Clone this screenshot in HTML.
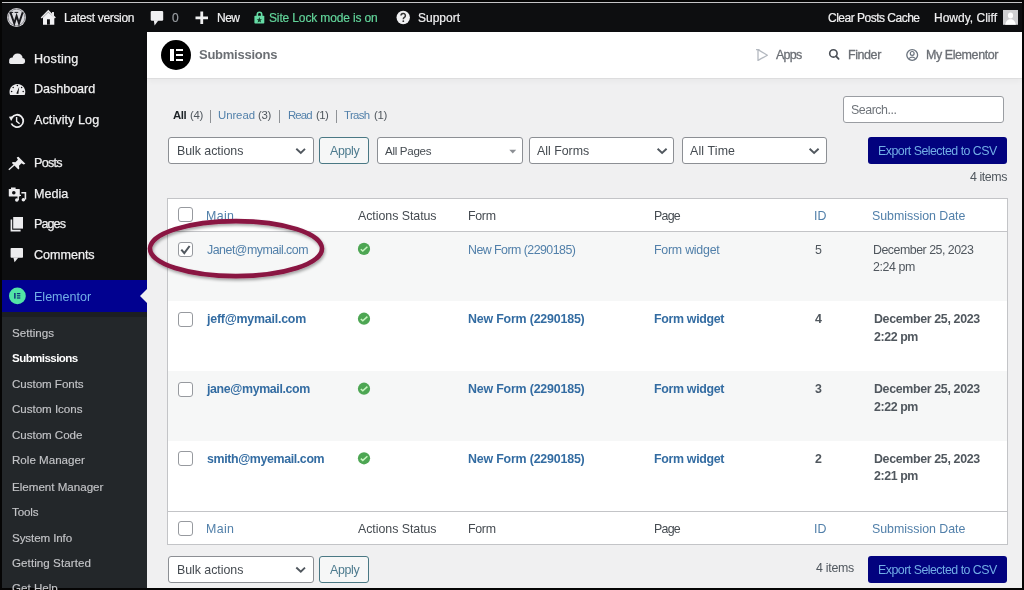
<!DOCTYPE html>
<html><head><meta charset="utf-8">
<style>
*{box-sizing:border-box;margin:0;padding:0}
html,body{width:1024px;height:590px;overflow:hidden;background:#050505;font-family:"Liberation Sans",sans-serif}
.a{position:absolute}
.t{position:absolute;white-space:nowrap;line-height:1;will-change:transform}
svg{position:absolute;overflow:visible}
#bar{position:absolute;left:2px;top:3px;width:1020px;height:29px;background:#0d0e10}
#topline{position:absolute;left:2px;top:2px;width:1020px;height:1px;background:#c4c4c6}
#side{position:absolute;left:2px;top:32px;width:145px;height:556px;background:#0d0e10}
#band{position:absolute;left:2px;top:280px;width:145px;height:32px;background:#010190}
#sub{position:absolute;left:2px;top:312px;width:145px;height:276px;background:#23272a;border-top:5px solid #1c1f22}
#content{position:absolute;left:147px;top:32px;width:875px;height:556px;background:#f0f0f1}
#hdr{position:absolute;left:147px;top:32px;width:875px;height:46px;background:#fff;box-shadow:0 1px 0 rgba(0,0,0,.05),0 3px 6px rgba(0,0,0,.04)}
.sel{position:absolute;background:#fff;border:1px solid #8c8f94;border-radius:3px;height:27px;top:137px}
.btn{position:absolute;background:#f6f7f7;border:1px solid #4a7884;border-radius:3px;height:27px;top:137px}
.exp{position:absolute;background:#02027e;border-radius:3px;height:27px;top:137px}
.cb{position:absolute;left:178px;width:15px;height:15px;border:1px solid #979a9f;border-radius:3px;background:#fff}
.ok{position:absolute;left:358px;width:13px;height:13px;border-radius:50%;background:#4fb05a}
#tbl{position:absolute;left:167px;top:198px;width:841px;height:347px;border:1px solid #c3c4c7;background:#fff}
.rw{position:absolute;left:168px;width:839px}
</style></head><body>
<div id="topline"></div>
<div id="bar"></div>
<div id="side"></div>
<div id="band"></div>
<div id="sub"></div>
<div id="content"></div>
<div id="hdr"></div>
<!-- pointer -->
<div class="a" style="left:140px;top:289px;width:0;height:0;border-top:7.5px solid transparent;border-bottom:7.5px solid transparent;border-right:7px solid #f0f0f1"></div>

<!-- elementor logo -->
<div class="a" style="left:161px;top:40px;width:30px;height:30px;border-radius:50%;background:#000"></div>
<div class="a" style="left:170px;top:49px;width:3.5px;height:12px;background:#fff"></div>
<div class="a" style="left:175.5px;top:49px;width:7px;height:2.4px;background:#fff"></div>
<div class="a" style="left:175.5px;top:53.8px;width:7px;height:2.4px;background:#fff"></div>
<div class="a" style="left:175.5px;top:58.6px;width:7px;height:2.4px;background:#fff"></div>

<!-- controls -->
<div class="sel" style="left:168px;width:146px"></div>
<div class="btn" style="left:319px;width:50px"></div>
<div class="sel" style="left:377px;width:146px"></div>
<div class="sel" style="left:529px;width:145px"></div>
<div class="sel" style="left:682px;width:145px"></div>
<div class="sel" style="left:843px;top:96px;width:161px;height:27px;border-color:#9a9da2"></div>
<div class="exp" style="left:868px;width:139px"></div>

<!-- table -->
<div id="tbl"></div>
<div class="a" style="left:168px;top:231px;width:839px;height:1px;background:#c3c4c7"></div>
<div class="rw" style="top:232px;height:69px;background:#f6f7f7"></div>
<div class="rw" style="top:371px;height:70px;background:#f6f7f7"></div>
<div class="a" style="left:168px;top:511px;width:839px;height:1px;background:#c3c4c7"></div>
<div class="cb" style="top:207px"></div>
<div class="cb" style="top:242px"></div>
<div class="cb" style="top:312px"></div>
<div class="cb" style="top:382px"></div>
<div class="cb" style="top:451px"></div>
<div class="cb" style="top:521px"></div>

<!-- bottom controls -->
<div class="sel" style="left:168px;top:556px;width:146px"></div>
<div class="btn" style="left:319px;top:556px;width:50px"></div>
<div class="exp" style="left:868px;top:556px;width:139px"></div>

<svg style="left:0;top:0" width="1024" height="590" viewBox="0 0 1024 590">
<!-- WP logo -->
<circle cx="16.5" cy="17.5" r="9.4" fill="#dcdce0"/>
<circle cx="16.5" cy="17.5" r="8.3" fill="none" stroke="#3a3a40" stroke-width="0.5"/>
<path d="M10.4 12.4 L14.3 23.4 L16.6 16 L19 23.4 L22.7 12.2" fill="none" stroke="#18181c" stroke-width="1.9" stroke-linejoin="miter"/>
<path d="M9.6 12.4 h3.6 M14.6 12.4 h3.6" stroke="#18181c" stroke-width="1"/>
<!-- home -->
<path d="M41.5 17.8 L48.3 10.9 L55.2 17.8 L53.9 17.8 L53.9 12.2 L52 12.2 L52 14.6 L48.3 10.9" fill="#eeeef0"/>
<path d="M41.3 18 L48.3 11 L55.3 18" fill="none" stroke="#e8e8ea" stroke-width="1.6"/>
<rect x="52" y="12.2" width="1.9" height="4" fill="#e8e8ea"/>
<path d="M43 17.4 L48.3 12.3 L54.3 17.4 L54.3 24.7 L43 24.7 Z" fill="#f2f2f4"/>
<rect x="47" y="19.3" width="2.9" height="5.4" fill="#0e0e10"/>
<!-- comment -->
<rect x="150.7" y="10.9" width="12.5" height="9.8" rx="1.2" fill="#f0f0f2"/>
<path d="M153.8 20.3 L154.6 25.4 L158.5 20.3 Z" fill="#f0f0f2"/>
<!-- plus -->
<path d="M195.5 17.8 H208 M201.75 11.6 V24" stroke="#f0f0f1" stroke-width="2.8"/>
<!-- lock -->
<path d="M257.3 16 V14.4 A2.2 2.2 0 0 1 261.7 14.4 V16" fill="none" stroke="#66dca6" stroke-width="1.6"/>
<rect x="254.4" y="15.8" width="9.9" height="7.8" rx="0.8" fill="#66dca6"/>
<path d="M259.35 17 L260.1 19.2 L262 19.3 L260.5 20.5 L261.1 22.6 L259.35 21.4 L257.6 22.6 L258.2 20.5 L256.7 19.3 L258.6 19.2 Z" fill="#123a26"/>
<!-- help -->
<circle cx="403.2" cy="17.5" r="6.7" fill="#f0f0f2"/>
<path d="M401 15.6 A2.2 2.1 0 1 1 404.4 17.3 Q403.3 18 403.3 19.3" fill="none" stroke="#333" stroke-width="1.5"/>
<circle cx="403.3" cy="21.2" r="0.9" fill="#333"/>
<!-- avatar -->
<rect x="1003" y="10" width="15" height="14.8" fill="#cfcfd1"/>
<ellipse cx="1010.5" cy="15.4" rx="2.6" ry="3" fill="#fff"/>
<path d="M1005.2 24.8 Q1005.8 20.4 1009.2 19.2 L1011.8 19.2 Q1015.2 20.4 1015.8 24.8 Z" fill="#fff"/>
<!-- sidebar icons -->
<g fill="#ececee"><circle cx="12.4" cy="60.6" r="3.2"/><circle cx="17.6" cy="58.4" r="5"/><circle cx="22.2" cy="61" r="2.9"/><rect x="11" y="60" width="11.5" height="3.9" rx="0.5"/><rect x="9.2" y="61" width="3" height="2.9" rx="1.4"/></g>
<path d="M10.1 94.9 A7.9 7.9 0 1 1 24.7 94.9 Z" fill="#ececee"/>
<g fill="#0e0e10"><circle cx="17.4" cy="85.6" r="0.75"/><circle cx="13.2" cy="87.6" r="0.75"/><circle cx="21.6" cy="87.6" r="0.75"/><circle cx="11.6" cy="91.4" r="0.75"/><circle cx="23.2" cy="91.4" r="0.75"/><path d="M19.2 86.8 L16.3 93.6 L18.3 94 Z"/></g>
<path d="M11.9 117.5 A6.2 6.2 0 1 1 11.4 123.5" fill="none" stroke="#ececee" stroke-width="1.8"/>
<path d="M8.9 116.8 L13.8 116.2 L11.2 121 Z" fill="#ececee"/>
<path d="M16.6 116.9 V121.3 L19.6 123.8" fill="none" stroke="#ececee" stroke-width="1.4"/>
<!-- posts pin -->
<path d="M18.4 156.8 L25.4 163.8 L23.6 164.6 L21.5 163.3 L19 165.8 L19.3 168.6 L18.4 169.4 L11.9 162.9 L12.7 162 L15.4 162.3 L17.9 159.8 L16.7 157.6 Z" fill="#ececee"/>
<path d="M14.7 164.4 L8.8 169.8" stroke="#ececee" stroke-width="1.3"/>
<!-- media -->
<rect x="8.8" y="189" width="11" height="7.6" rx="0.6" fill="#ececee"/>
<rect x="11" y="187.5" width="4.6" height="2.2" fill="#ececee"/>
<circle cx="13.8" cy="192.7" r="1.8" fill="#0e0e10"/>
<path d="M21.4 192.7 H25.4 V199.4" fill="none" stroke="#ececee" stroke-width="1.6"/>
<circle cx="23.4" cy="199.8" r="1.8" fill="#ececee"/>
<circle cx="16.8" cy="200" r="1.8" fill="#ececee"/>
<path d="M18.2 200 V195.4 H21" fill="none" stroke="#ececee" stroke-width="1.4"/>
<!-- pages -->
<rect x="13.2" y="217" width="9.8" height="11.6" fill="#ececee"/>
<path d="M11.4 219.6 V230.6 H20.6" fill="none" stroke="#ececee" stroke-width="1.6"/>
<!-- comments -->
<rect x="10.6" y="248" width="12.4" height="9.8" rx="0.8" fill="#ececee"/>
<path d="M13.4 257.4 L14.6 262.2 L18.4 257.4 Z" fill="#ececee"/>
<!-- elementor sidebar -->
<circle cx="17.4" cy="295.9" r="8.4" fill="#52e3a6"/>
<rect x="14.1" y="293" width="1.5" height="5.6" fill="#10307a"/>
<rect x="16.9" y="293" width="3.4" height="1.2" fill="#10307a"/>
<rect x="16.9" y="295.2" width="3.4" height="1.2" fill="#10307a"/>
<rect x="16.9" y="297.4" width="3.4" height="1.2" fill="#10307a"/>
<!-- header icons -->
<path d="M758 49.6 V60.4 L767.4 55.2 Z M756 49.6 H759.6" fill="none" stroke="#b4b9c0" stroke-width="1.3" stroke-linejoin="round"/>
<circle cx="833.4" cy="53.4" r="3.7" fill="none" stroke="#4a4f56" stroke-width="1.6"/>
<path d="M836 56.2 L838.6 58.9" stroke="#4a4f56" stroke-width="1.8" stroke-linecap="round"/>
<circle cx="912.2" cy="55" r="5.4" fill="none" stroke="#69727d" stroke-width="1.3"/>
<circle cx="912.2" cy="53.4" r="1.9" fill="none" stroke="#69727d" stroke-width="1.2"/>
<path d="M908.8 58.6 Q912.2 55.6 915.6 58.6" fill="none" stroke="#69727d" stroke-width="1.2"/>
<!-- chevrons -->
<g fill="none" stroke="#50575e" stroke-width="1.9">
<path d="M296.3 148.8 L300.8 153 L305 148.9"/>
<path d="M657.6 148.8 L662.1 153 L666.6 148.8"/>
<path d="M809.6 148.8 L814.1 153 L818.6 148.8"/>
<path d="M296.3 567.5 L300.8 571.7 L305 567.6"/>
</g>
<path d="M509.3 149.8 H516.2 L512.75 153.6 Z" fill="#8c8f94"/>
<!-- check in checkbox -->
<path d="M181.3 249.6 L184.3 253.2 L189.6 246" fill="none" stroke="#50575e" stroke-width="2"/>
<!-- green checks -->
<g>
<circle cx="364" cy="248.9" r="6.1" fill="#4da653"/>
<circle cx="364" cy="318.7" r="6.1" fill="#4da653"/>
<circle cx="364" cy="388.7" r="6.1" fill="#4da653"/>
<circle cx="364" cy="458.3" r="6.1" fill="#4da653"/>
</g>
<g fill="none" stroke="#c8f5c0" stroke-width="1.5">
<path d="M360.8 249.2 L362.8 251 L367.4 246.8"/>
<path d="M360.8 319 L362.8 320.8 L367.4 316.6"/>
<path d="M360.8 389 L362.8 390.8 L367.4 386.6"/>
<path d="M360.8 458.6 L362.8 460.4 L367.4 456.2"/>
</g>
</svg>

<div class="t" style="left:63.60px;top:11.84px;font-size:12px;color:#f0f0f1;letter-spacing:-0.331px;-webkit-text-stroke:0.2px currentColor;">Latest version</div>
<div class="t" style="left:171.70px;top:11.84px;font-size:12px;color:#9a9ea3;-webkit-text-stroke:0.2px currentColor;">0</div>
<div class="t" style="left:216.60px;top:11.84px;font-size:12px;color:#f0f0f1;letter-spacing:-0.530px;-webkit-text-stroke:0.2px currentColor;">New</div>
<div class="t" style="left:269.20px;top:11.84px;font-size:12px;color:#62d49a;letter-spacing:-0.138px;-webkit-text-stroke:0.2px currentColor;">Site Lock mode is on</div>
<div class="t" style="left:418.00px;top:11.84px;font-size:12px;color:#f0f0f1;letter-spacing:-0.010px;-webkit-text-stroke:0.2px currentColor;">Support</div>
<div class="t" style="left:828.00px;top:11.84px;font-size:12px;color:#f0f0f1;letter-spacing:-0.501px;-webkit-text-stroke:0.2px currentColor;">Clear Posts Cache</div>
<div class="t" style="left:934.00px;top:11.84px;font-size:12px;color:#f0f0f1;letter-spacing:0.005px;-webkit-text-stroke:0.2px currentColor;">Howdy, Cliff</div>
<div class="t" style="left:33.80px;top:52.73px;font-size:12.6px;color:#f0f0f1;letter-spacing:0.248px;-webkit-text-stroke:0.25px #f0f0f1;">Hosting</div>
<div class="t" style="left:33.80px;top:83.33px;font-size:12.6px;color:#f0f0f1;letter-spacing:-0.052px;-webkit-text-stroke:0.25px #f0f0f1;">Dashboard</div>
<div class="t" style="left:33.80px;top:114.33px;font-size:12.6px;color:#f0f0f1;letter-spacing:0.068px;-webkit-text-stroke:0.25px #f0f0f1;">Activity Log</div>
<div class="t" style="left:33.80px;top:157.03px;font-size:12.6px;color:#f0f0f1;letter-spacing:-0.725px;-webkit-text-stroke:0.25px #f0f0f1;">Posts</div>
<div class="t" style="left:33.80px;top:187.53px;font-size:12.6px;color:#f0f0f1;letter-spacing:-0.024px;-webkit-text-stroke:0.25px #f0f0f1;">Media</div>
<div class="t" style="left:33.80px;top:217.93px;font-size:12.6px;color:#f0f0f1;letter-spacing:-0.930px;-webkit-text-stroke:0.25px #f0f0f1;">Pages</div>
<div class="t" style="left:33.80px;top:248.73px;font-size:12.6px;color:#f0f0f1;letter-spacing:-0.032px;-webkit-text-stroke:0.25px #f0f0f1;">Comments</div>
<div class="t" style="left:33.60px;top:290.93px;font-size:12.6px;color:#72aee6;letter-spacing:-0.032px;">Elementor</div>
<div class="t" style="left:12.00px;top:326.98px;font-size:11.6px;color:#c3c4c7;letter-spacing:0.009px;-webkit-text-stroke:0.15px currentColor;">Settings</div>
<div class="t" style="left:12.00px;top:377.88px;font-size:11.6px;color:#c3c4c7;letter-spacing:-0.046px;-webkit-text-stroke:0.15px currentColor;">Custom Fonts</div>
<div class="t" style="left:12.00px;top:403.08px;font-size:11.6px;color:#c3c4c7;letter-spacing:-0.039px;-webkit-text-stroke:0.15px currentColor;">Custom Icons</div>
<div class="t" style="left:12.00px;top:428.78px;font-size:11.6px;color:#c3c4c7;letter-spacing:-0.043px;-webkit-text-stroke:0.15px currentColor;">Custom Code</div>
<div class="t" style="left:12.00px;top:453.88px;font-size:11.6px;color:#c3c4c7;-webkit-text-stroke:0.15px currentColor;">Role Manager</div>
<div class="t" style="left:12.00px;top:480.58px;font-size:11.6px;color:#c3c4c7;letter-spacing:-0.006px;-webkit-text-stroke:0.15px currentColor;">Element Manager</div>
<div class="t" style="left:12.00px;top:506.08px;font-size:11.6px;color:#c3c4c7;letter-spacing:-0.121px;-webkit-text-stroke:0.15px currentColor;">Tools</div>
<div class="t" style="left:12.00px;top:531.78px;font-size:11.6px;color:#c3c4c7;letter-spacing:-0.105px;-webkit-text-stroke:0.15px currentColor;">System Info</div>
<div class="t" style="left:12.00px;top:556.88px;font-size:11.6px;color:#c3c4c7;letter-spacing:0.064px;-webkit-text-stroke:0.15px currentColor;">Getting Started</div>
<div class="t" style="left:12.00px;top:582.18px;font-size:11.6px;color:#c3c4c7;-webkit-text-stroke:0.15px currentColor;">Get Help</div>
<div class="t" style="left:12.00px;top:351.78px;font-size:11.6px;color:#ffffff;font-weight:bold;letter-spacing:-0.591px;">Submissions</div>
<div class="t" style="left:198.60px;top:47.69px;font-size:13px;color:#6b6f74;font-weight:bold;letter-spacing:-0.252px;">Submissions</div>
<div class="t" style="left:776.00px;top:49.32px;font-size:12.5px;color:#6b6f75;letter-spacing:-0.733px;-webkit-text-stroke:0.3px currentColor;">Apps</div>
<div class="t" style="left:847.50px;top:49.32px;font-size:12.5px;color:#6b6f75;letter-spacing:-0.428px;-webkit-text-stroke:0.3px currentColor;">Finder</div>
<div class="t" style="left:926.00px;top:49.32px;font-size:12.5px;color:#6b6f75;letter-spacing:-0.430px;-webkit-text-stroke:0.3px currentColor;">My Elementor</div>
<div class="t" style="left:172.90px;top:110.15px;font-size:11.4px;color:#1d2327;font-weight:bold;letter-spacing:-0.496px;">All</div>
<div class="t" style="left:190.00px;top:110.15px;font-size:11.4px;color:#50575e;letter-spacing:-0.254px;">(4)</div>
<div class="t" style="left:217.90px;top:110.15px;font-size:11.4px;color:#5280aa;letter-spacing:-0.078px;">Unread</div>
<div class="t" style="left:258.40px;top:110.15px;font-size:11.4px;color:#50575e;letter-spacing:-0.254px;">(3)</div>
<div class="t" style="left:287.50px;top:110.15px;font-size:11.4px;color:#5280aa;letter-spacing:-0.915px;">Read</div>
<div class="t" style="left:316.00px;top:110.15px;font-size:11.4px;color:#50575e;letter-spacing:-0.554px;">(1)</div>
<div class="t" style="left:344.00px;top:110.15px;font-size:11.4px;color:#5280aa;letter-spacing:-0.632px;">Trash</div>
<div class="t" style="left:373.70px;top:110.15px;font-size:11.4px;color:#50575e;letter-spacing:-0.354px;">(1)</div>
<div class="a" style="left:209.7px;top:110.3px;width:1.1px;height:12.4px;background:#8f9296"></div>
<div class="a" style="left:279.1px;top:110.3px;width:1.1px;height:12.4px;background:#8f9296"></div>
<div class="a" style="left:335.7px;top:110.3px;width:1.1px;height:12.4px;background:#8f9296"></div>
<div class="t" style="left:176.80px;top:144.60px;font-size:12.4px;color:#454b51;letter-spacing:-0.040px;">Bulk actions</div>
<div class="t" style="left:329.70px;top:144.60px;font-size:12.4px;color:#4d7b8e;letter-spacing:-0.325px;">Apply</div>
<div class="t" style="left:385.30px;top:144.98px;font-size:11.6px;color:#454b51;letter-spacing:-0.314px;">All Pages</div>
<div class="t" style="left:537.30px;top:144.60px;font-size:12.4px;color:#454b51;letter-spacing:-0.016px;">All Forms</div>
<div class="t" style="left:689.70px;top:144.60px;font-size:12.4px;color:#454b51;letter-spacing:0.131px;">All Time</div>
<div class="t" style="left:850.80px;top:103.50px;font-size:12.4px;color:#6f747a;letter-spacing:-0.463px;">Search...</div>
<div class="t" style="left:878.30px;top:144.90px;font-size:12.4px;color:#72aee6;letter-spacing:-0.517px;">Export Selected to CSV</div>
<div class="t" style="left:969.80px;top:170.80px;font-size:12.4px;color:#50575e;letter-spacing:-0.432px;">4 items</div>
<div class="t" style="left:206.40px;top:209.80px;font-size:12.4px;color:#5280aa;letter-spacing:0.364px;">Main</div>
<div class="t" style="left:357.90px;top:209.80px;font-size:12.4px;color:#454b51;letter-spacing:-0.049px;">Actions Status</div>
<div class="t" style="left:468.20px;top:209.80px;font-size:12.4px;color:#454b51;letter-spacing:-0.318px;">Form</div>
<div class="t" style="left:654.10px;top:209.80px;font-size:12.4px;color:#454b51;letter-spacing:-0.751px;">Page</div>
<div class="t" style="left:813.70px;top:209.80px;font-size:12.4px;color:#5280aa;">ID</div>
<div class="t" style="left:871.90px;top:209.80px;font-size:12.4px;color:#5280aa;letter-spacing:-0.017px;">Submission Date</div>
<div class="t" style="left:206.40px;top:523.00px;font-size:12.4px;color:#5280aa;letter-spacing:0.364px;">Main</div>
<div class="t" style="left:357.90px;top:523.00px;font-size:12.4px;color:#454b51;letter-spacing:-0.049px;">Actions Status</div>
<div class="t" style="left:468.20px;top:523.00px;font-size:12.4px;color:#454b51;letter-spacing:-0.318px;">Form</div>
<div class="t" style="left:654.10px;top:523.00px;font-size:12.4px;color:#454b51;letter-spacing:-0.751px;">Page</div>
<div class="t" style="left:813.70px;top:523.00px;font-size:12.4px;color:#5280aa;">ID</div>
<div class="t" style="left:871.90px;top:523.00px;font-size:12.4px;color:#5280aa;letter-spacing:-0.017px;">Submission Date</div>
<div class="t" style="left:207.40px;top:243.90px;font-size:12.4px;color:#5280aa;letter-spacing:-0.497px;">Janet@mymail.com</div>
<div class="t" style="left:468.20px;top:243.70px;font-size:12.4px;color:#5280aa;letter-spacing:-0.540px;">New Form (2290185)</div>
<div class="t" style="left:654.00px;top:243.70px;font-size:12.4px;color:#5280aa;letter-spacing:-0.240px;">Form widget</div>
<div class="t" style="left:815.00px;top:243.70px;font-size:12.4px;color:#50575e;">5</div>
<div class="t" style="left:873.00px;top:243.80px;font-size:12.4px;color:#50575e;letter-spacing:-0.496px;">December 25, 2023</div>
<div class="t" style="left:873.00px;top:260.70px;font-size:12.4px;color:#50575e;letter-spacing:-0.421px;">2:24 pm</div>
<div class="t" style="left:207.25px;top:313.10px;font-size:12.4px;color:#336ca2;font-weight:bold;letter-spacing:-0.222px;">jeff@mymail.com</div>
<div class="t" style="left:468.20px;top:313.10px;font-size:12.4px;color:#336ca2;font-weight:bold;letter-spacing:-0.183px;">New Form (2290185)</div>
<div class="t" style="left:654.20px;top:313.10px;font-size:12.4px;color:#336ca2;font-weight:bold;letter-spacing:-0.322px;">Form widget</div>
<div class="t" style="left:814.70px;top:313.10px;font-size:12.4px;color:#50575e;font-weight:bold;">4</div>
<div class="t" style="left:873.60px;top:313.10px;font-size:12.4px;color:#50575e;font-weight:bold;letter-spacing:-0.341px;">December 25, 2023</div>
<div class="t" style="left:873.60px;top:330.60px;font-size:12.4px;color:#50575e;font-weight:bold;letter-spacing:-0.412px;">2:22 pm</div>
<div class="t" style="left:207.25px;top:383.10px;font-size:12.4px;color:#336ca2;font-weight:bold;letter-spacing:-0.372px;">jane@mymail.com</div>
<div class="t" style="left:468.20px;top:383.10px;font-size:12.4px;color:#336ca2;font-weight:bold;letter-spacing:-0.183px;">New Form (2290185)</div>
<div class="t" style="left:654.20px;top:383.10px;font-size:12.4px;color:#336ca2;font-weight:bold;letter-spacing:-0.322px;">Form widget</div>
<div class="t" style="left:814.70px;top:383.10px;font-size:12.4px;color:#50575e;font-weight:bold;">3</div>
<div class="t" style="left:873.60px;top:383.10px;font-size:12.4px;color:#50575e;font-weight:bold;letter-spacing:-0.341px;">December 25, 2023</div>
<div class="t" style="left:873.60px;top:400.60px;font-size:12.4px;color:#50575e;font-weight:bold;letter-spacing:-0.412px;">2:22 pm</div>
<div class="t" style="left:207.00px;top:452.70px;font-size:12.4px;color:#336ca2;font-weight:bold;letter-spacing:-0.378px;">smith@myemail.com</div>
<div class="t" style="left:468.20px;top:452.70px;font-size:12.4px;color:#336ca2;font-weight:bold;letter-spacing:-0.183px;">New Form (2290185)</div>
<div class="t" style="left:654.20px;top:452.70px;font-size:12.4px;color:#336ca2;font-weight:bold;letter-spacing:-0.322px;">Form widget</div>
<div class="t" style="left:814.70px;top:452.70px;font-size:12.4px;color:#50575e;font-weight:bold;">2</div>
<div class="t" style="left:873.60px;top:452.70px;font-size:12.4px;color:#50575e;font-weight:bold;letter-spacing:-0.341px;">December 25, 2023</div>
<div class="t" style="left:873.60px;top:470.20px;font-size:12.4px;color:#50575e;font-weight:bold;letter-spacing:-0.412px;">2:21 pm</div>
<div class="t" style="left:176.80px;top:563.50px;font-size:12.4px;color:#454b51;letter-spacing:-0.040px;">Bulk actions</div>
<div class="t" style="left:329.70px;top:563.50px;font-size:12.4px;color:#4d7b8e;letter-spacing:-0.325px;">Apply</div>
<div class="t" style="left:816.20px;top:562.00px;font-size:12.4px;color:#50575e;letter-spacing:-0.282px;">4 items</div>
<div class="t" style="left:878.30px;top:563.50px;font-size:12.4px;color:#72aee6;letter-spacing:-0.517px;">Export Selected to CSV</div>

<!-- ellipse -->
<svg style="left:0;top:0" width="1024" height="590" viewBox="0 0 1024 590">
<defs><filter id="sh" x="-20%" y="-40%" width="140%" height="180%"><feDropShadow dx="1" dy="2" stdDeviation="1.6" flood-color="#000" flood-opacity="0.35"/></filter></defs>
<ellipse cx="236" cy="248.6" rx="86" ry="27.5" fill="none" stroke="#8a1442" stroke-width="4.6" filter="url(#sh)"/>
</svg>
</body></html>
